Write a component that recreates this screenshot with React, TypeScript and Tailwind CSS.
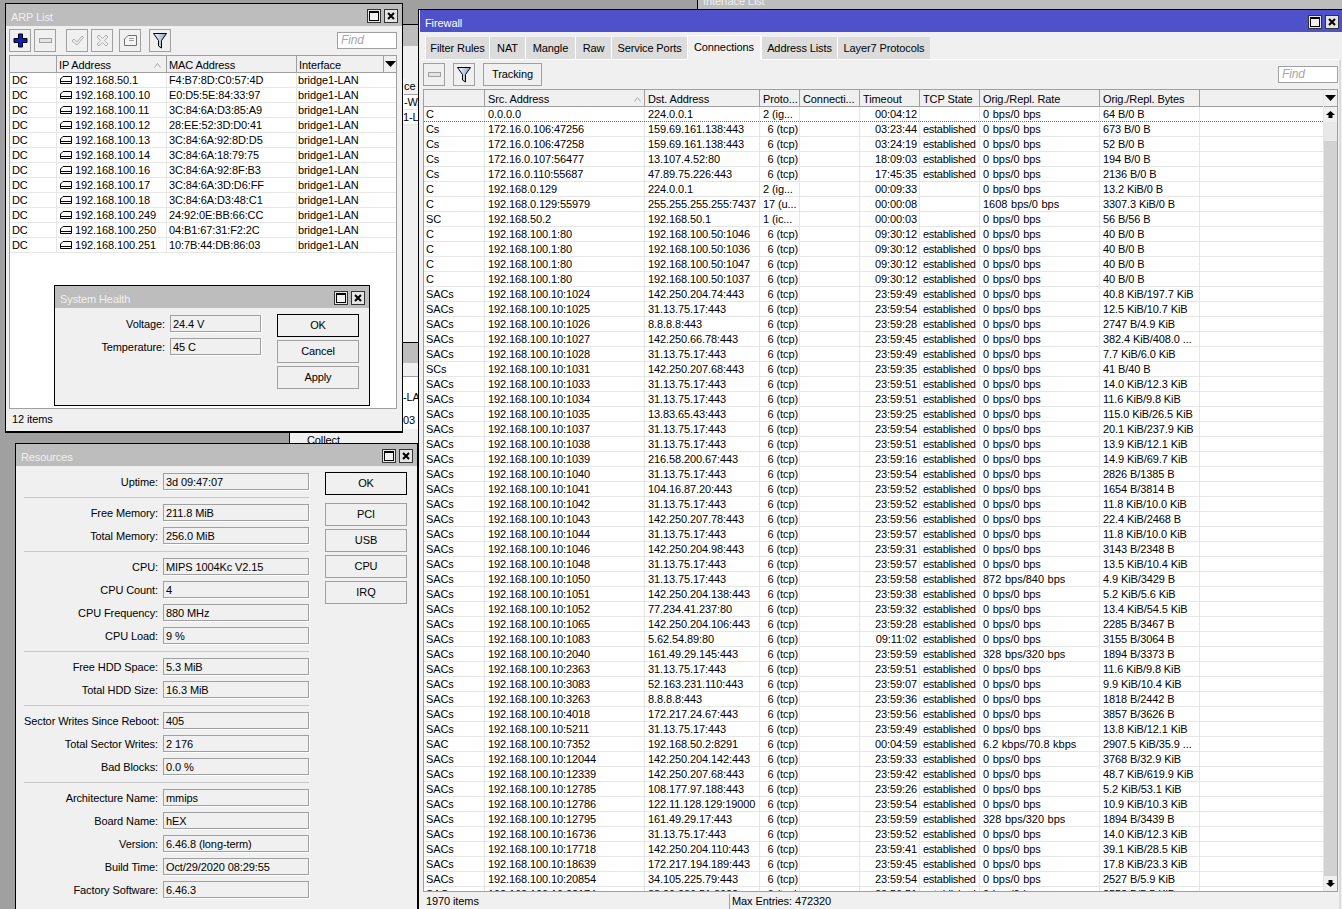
import type { ReactNode } from 'react'

const font = { fontFamily: '"Liberation Sans", Arial, sans-serif' }

const arpRows = [
  ['192.168.50.1', 'F4:B7:8D:C0:57:4D'],
  ['192.168.100.10', 'E0:D5:5E:84:33:97'],
  ['192.168.100.11', '3C:84:6A:D3:85:A9'],
  ['192.168.100.12', '28:EE:52:3D:D0:41'],
  ['192.168.100.13', '3C:84:6A:92:8D:D5'],
  ['192.168.100.14', '3C:84:6A:18:79:75'],
  ['192.168.100.16', '3C:84:6A:92:8F:B3'],
  ['192.168.100.17', '3C:84:6A:3D:D6:FF'],
  ['192.168.100.18', '3C:84:6A:D3:48:C1'],
  ['192.168.100.249', '24:92:0E:BB:66:CC'],
  ['192.168.100.250', '04:B1:67:31:F2:2C'],
  ['192.168.100.251', '10:7B:44:DB:86:03'],
]

// flags|src|dst|proto|timeout|state|rate|bytes
const connections = `C|0.0.0.0|224.0.0.1|2 (ig...|00:04:12||0 bps/0 bps|64 B/0 B
Cs|172.16.0.106:47256|159.69.161.138:443|6 (tcp)|03:23:44|established|0 bps/0 bps|673 B/0 B
Cs|172.16.0.106:47258|159.69.161.138:443|6 (tcp)|03:24:19|established|0 bps/0 bps|52 B/0 B
Cs|172.16.0.107:56477|13.107.4.52:80|6 (tcp)|18:09:03|established|0 bps/0 bps|194 B/0 B
Cs|172.16.0.110:55687|47.89.75.226:443|6 (tcp)|17:45:35|established|0 bps/0 bps|2136 B/0 B
C|192.168.0.129|224.0.0.1|2 (ig...|00:09:33||0 bps/0 bps|13.2 KiB/0 B
C|192.168.0.129:55979|255.255.255.255:7437|17 (u...|00:00:08||1608 bps/0 bps|3307.3 KiB/0 B
SC|192.168.50.2|192.168.50.1|1 (ic...|00:00:03||0 bps/0 bps|56 B/56 B
C|192.168.100.1:80|192.168.100.50:1046|6 (tcp)|09:30:12|established|0 bps/0 bps|40 B/0 B
C|192.168.100.1:80|192.168.100.50:1036|6 (tcp)|09:30:12|established|0 bps/0 bps|40 B/0 B
C|192.168.100.1:80|192.168.100.50:1047|6 (tcp)|09:30:12|established|0 bps/0 bps|40 B/0 B
C|192.168.100.1:80|192.168.100.50:1037|6 (tcp)|09:30:12|established|0 bps/0 bps|40 B/0 B
SACs|192.168.100.10:1024|142.250.204.74:443|6 (tcp)|23:59:49|established|0 bps/0 bps|40.8 KiB/197.7 KiB
SACs|192.168.100.10:1025|31.13.75.17:443|6 (tcp)|23:59:54|established|0 bps/0 bps|12.5 KiB/10.7 KiB
SACs|192.168.100.10:1026|8.8.8.8:443|6 (tcp)|23:59:28|established|0 bps/0 bps|2747 B/4.9 KiB
SACs|192.168.100.10:1027|142.250.66.78:443|6 (tcp)|23:59:45|established|0 bps/0 bps|382.4 KiB/408.0 ...
SACs|192.168.100.10:1028|31.13.75.17:443|6 (tcp)|23:59:49|established|0 bps/0 bps|7.7 KiB/6.0 KiB
SCs|192.168.100.10:1031|142.250.207.68:443|6 (tcp)|23:59:35|established|0 bps/0 bps|41 B/40 B
SACs|192.168.100.10:1033|31.13.75.17:443|6 (tcp)|23:59:51|established|0 bps/0 bps|14.0 KiB/12.3 KiB
SACs|192.168.100.10:1034|31.13.75.17:443|6 (tcp)|23:59:51|established|0 bps/0 bps|11.6 KiB/9.8 KiB
SACs|192.168.100.10:1035|13.83.65.43:443|6 (tcp)|23:59:25|established|0 bps/0 bps|115.0 KiB/26.5 KiB
SACs|192.168.100.10:1037|31.13.75.17:443|6 (tcp)|23:59:54|established|0 bps/0 bps|20.1 KiB/237.9 KiB
SACs|192.168.100.10:1038|31.13.75.17:443|6 (tcp)|23:59:51|established|0 bps/0 bps|13.9 KiB/12.1 KiB
SACs|192.168.100.10:1039|216.58.200.67:443|6 (tcp)|23:59:16|established|0 bps/0 bps|14.9 KiB/69.7 KiB
SACs|192.168.100.10:1040|31.13.75.17:443|6 (tcp)|23:59:54|established|0 bps/0 bps|2826 B/1385 B
SACs|192.168.100.10:1041|104.16.87.20:443|6 (tcp)|23:59:52|established|0 bps/0 bps|1654 B/3814 B
SACs|192.168.100.10:1042|31.13.75.17:443|6 (tcp)|23:59:52|established|0 bps/0 bps|11.8 KiB/10.0 KiB
SACs|192.168.100.10:1043|142.250.207.78:443|6 (tcp)|23:59:56|established|0 bps/0 bps|22.4 KiB/2468 B
SACs|192.168.100.10:1044|31.13.75.17:443|6 (tcp)|23:59:57|established|0 bps/0 bps|11.8 KiB/10.0 KiB
SACs|192.168.100.10:1046|142.250.204.98:443|6 (tcp)|23:59:31|established|0 bps/0 bps|3143 B/2348 B
SACs|192.168.100.10:1048|31.13.75.17:443|6 (tcp)|23:59:57|established|0 bps/0 bps|13.5 KiB/10.4 KiB
SACs|192.168.100.10:1050|31.13.75.17:443|6 (tcp)|23:59:58|established|872 bps/840 bps|4.9 KiB/3429 B
SACs|192.168.100.10:1051|142.250.204.138:443|6 (tcp)|23:59:38|established|0 bps/0 bps|5.2 KiB/5.6 KiB
SACs|192.168.100.10:1052|77.234.41.237:80|6 (tcp)|23:59:32|established|0 bps/0 bps|13.4 KiB/54.5 KiB
SACs|192.168.100.10:1065|142.250.204.106:443|6 (tcp)|23:59:28|established|0 bps/0 bps|2285 B/3467 B
SACs|192.168.100.10:1083|5.62.54.89:80|6 (tcp)|09:11:02|established|0 bps/0 bps|3155 B/3064 B
SACs|192.168.100.10:2040|161.49.29.145:443|6 (tcp)|23:59:59|established|328 bps/320 bps|1894 B/3373 B
SACs|192.168.100.10:2363|31.13.75.17:443|6 (tcp)|23:59:51|established|0 bps/0 bps|11.6 KiB/9.8 KiB
SACs|192.168.100.10:3083|52.163.231.110:443|6 (tcp)|23:59:07|established|0 bps/0 bps|9.9 KiB/10.4 KiB
SACs|192.168.100.10:3263|8.8.8.8:443|6 (tcp)|23:59:36|established|0 bps/0 bps|1818 B/2442 B
SACs|192.168.100.10:4018|172.217.24.67:443|6 (tcp)|23:59:56|established|0 bps/0 bps|3857 B/3626 B
SACs|192.168.100.10:5211|31.13.75.17:443|6 (tcp)|23:59:49|established|0 bps/0 bps|13.8 KiB/12.1 KiB
SAC|192.168.100.10:7352|192.168.50.2:8291|6 (tcp)|00:04:59|established|6.2 kbps/70.8 kbps|2907.5 KiB/35.9 ...
SACs|192.168.100.10:12044|142.250.204.142:443|6 (tcp)|23:59:33|established|0 bps/0 bps|3768 B/32.9 KiB
SACs|192.168.100.10:12339|142.250.207.68:443|6 (tcp)|23:59:42|established|0 bps/0 bps|48.7 KiB/619.9 KiB
SACs|192.168.100.10:12785|108.177.97.188:443|6 (tcp)|23:59:26|established|0 bps/0 bps|5.2 KiB/53.1 KiB
SACs|192.168.100.10:12786|122.11.128.129:19000|6 (tcp)|23:59:54|established|0 bps/0 bps|10.9 KiB/10.3 KiB
SACs|192.168.100.10:12795|161.49.29.17:443|6 (tcp)|23:59:59|established|328 bps/320 bps|1894 B/3439 B
SACs|192.168.100.10:16736|31.13.75.17:443|6 (tcp)|23:59:52|established|0 bps/0 bps|14.0 KiB/12.3 KiB
SACs|192.168.100.10:17718|142.250.204.110:443|6 (tcp)|23:59:41|established|0 bps/0 bps|39.1 KiB/28.5 KiB
SACs|192.168.100.10:18639|172.217.194.189:443|6 (tcp)|23:59:45|established|0 bps/0 bps|17.8 KiB/23.3 KiB
SACs|192.168.100.10:20854|34.105.225.79:443|6 (tcp)|23:59:54|established|0 bps/0 bps|2527 B/5.9 KiB
SAC|192.168.100.10:22174|38.99.236.51:8082|6 (tcp)|23:56:51|established|0 bps/0 bps|2558 B/5.5 KiB`
  .split('\n')
  .map((line) => line.split('|'))

const resourceGroups = [
  [['Uptime', '3d 09:47:07']],
  [
    ['Free Memory', '211.8 MiB'],
    ['Total Memory', '256.0 MiB'],
  ],
  [
    ['CPU', 'MIPS 1004Kc V2.15'],
    ['CPU Count', '4'],
    ['CPU Frequency', '880 MHz'],
    ['CPU Load', '9 %'],
  ],
  [
    ['Free HDD Space', '5.3 MiB'],
    ['Total HDD Size', '16.3 MiB'],
  ],
  [
    ['Sector Writes Since Reboot', '405'],
    ['Total Sector Writes', '2 176'],
    ['Bad Blocks', '0.0 %'],
  ],
  [
    ['Architecture Name', 'mmips'],
    ['Board Name', 'hEX'],
    ['Version', '6.46.8 (long-term)'],
    ['Build Time', 'Oct/29/2020 08:29:55'],
    ['Factory Software', '6.46.3'],
  ],
]

function TitleButtons() {
  return (
    <div className="flex gap-[3px]">
      <div className="w-[14px] h-[14px] border border-[#333] bg-[#e4e4e4] flex items-center justify-center">
        <div className="w-[10px] h-[10px] border border-black border-t-2 bg-[#f0f0f0]" />
      </div>
      <div className="w-[14px] h-[14px] border border-[#333] bg-[#e4e4e4] flex items-center justify-center">
        <svg width="8" height="8" viewBox="0 0 8 8">
          <path d="M1 1l6 6M7 1L1 7" stroke="#000" strokeWidth="2" />
        </svg>
      </div>
    </div>
  )
}

function TitleBar({ title, active }: { title: string; active?: boolean }) {
  return (
    <div
      className={`h-[22px] shrink-0 flex items-center justify-between pt-[2px] pl-[5px] pr-[4px] text-[11px] ${
        active ? 'bg-[#4f51cb] text-white' : 'bg-[#bdbdbd] text-[#f0f0f0]'
      }`}
    >
      <span className="pt-[2px]">{title}</span>
      <TitleButtons />
    </div>
  )
}

function ToolButton({ children, className = 'w-[22px]' }: { children: ReactNode; className?: string }) {
  return (
    <div className={`h-[23px] border border-[#a0a0a0] bg-[#f0f0f0] flex items-center justify-center ${className}`}>
      {children}
    </div>
  )
}

function PlusIcon() {
  return (
    <svg width="15" height="15" viewBox="0 0 15 15">
      <path d="M5.5 1h4v4.5H14v4H9.5V14h-4V9.5H1v-4h4.5z" fill="#0a1ec8" stroke="#000" />
    </svg>
  )
}

function MinusIcon() {
  return <div className="w-[13px] h-[5px] border border-[#a0a0a0] bg-[#e4e4e4]" />
}

function CheckIcon() {
  return (
    <svg width="15" height="15" viewBox="0 0 15 15">
      <path d="M2 8l2-2 3 3 5-6 1.500 1.500L7 12z" fill="#eee" stroke="#b0b0b0" />
    </svg>
  )
}

function CrossIcon() {
  return (
    <svg width="15" height="15" viewBox="0 0 15 15">
      <path d="M2 4l2-2 3.500 3.500L11 2l2 2-3.500 3.500L13 11l-2 2-3.500-3.500L4 13l-2-2 3.500-3.500z" fill="#eee" stroke="#b0b0b0" />
    </svg>
  )
}

function NoteIcon() {
  return (
    <svg width="15" height="13" viewBox="0 0 15 13">
      <path d="M1.500 11.500V5L5 1.500h8.500v10z" fill="#f4f4f4" stroke="#707070" />
      <path d="M6 4.500h5M6 6.500h5" stroke="#a0a0a0" />
    </svg>
  )
}

function FilterIcon() {
  return (
    <svg width="14" height="17" viewBox="0 0 14 17">
      <defs>
        <linearGradient id="funnel" x1="0" x2="1" y1="0" y2="0">
          <stop offset="0" stopColor="#f4f8fc" />
          <stop offset="1" stopColor="#8aa4c0" />
        </linearGradient>
      </defs>
      <path d="M.5 1.500h13L8.500 8.500v7.500l-3-2V8.500z" fill="url(#funnel)" stroke="#000" />
    </svg>
  )
}

function RowIcon() {
  return (
    <svg width="12" height="8" viewBox="0 0 12 8" className="shrink-0">
      <path d="M.5 7.500V3L3 .5h8.500v7z" fill="#fff" stroke="#000" />
      <path d="M1 5.500h10" stroke="#000" />
    </svg>
  )
}

function Arrow({ up }: { up?: boolean }) {
  return (
    <svg width="9" height="7" viewBox="0 0 9 7">
      <path d={up ? 'M4.500 0L9 4H6.500v3h-4V4H0z' : 'M2.500 0h4v3H9L4.500 7 0 3h2.500z'} fill="#000" />
    </svg>
  )
}

function DropTriangle() {
  return (
    <svg width="11" height="6" viewBox="0 0 11 6">
      <path d="M0 0h11L5.500 6z" fill="#000" />
    </svg>
  )
}

function SortMark() {
  return (
    <svg width="7" height="5" viewBox="0 0 7 5" className="shrink-0">
      <path d="M.5 4.500L3.500.5l3 4" fill="none" stroke="#a8a8a8" />
    </svg>
  )
}

function FindBox({ className }: { className: string }) {
  return (
    <div className={`h-[17px] border border-[#a0a0a0] bg-white text-[#a8a8a8] italic text-[12px] leading-[15px] pl-[3px] ${className}`}>
      Find
    </div>
  )
}

function HeaderCell({ children, className }: { children?: ReactNode; className: string }) {
  return (
    <div className={`h-full shrink-0 flex items-center pt-[2px] pr-[2px] border-r border-[#a0a0a0] whitespace-nowrap overflow-hidden ${className}`}>
      {children}
    </div>
  )
}

function Cell({ children, className }: { children?: ReactNode; className: string }) {
  return (
    <div className={`h-full shrink-0 flex items-center border-r border-[#e6e6e6] whitespace-nowrap overflow-hidden ${className}`}>
      {children}
    </div>
  )
}

function Field({ label, value, labelWidth }: { label: string; value: string; labelWidth: string }) {
  return (
    <div className="flex items-center h-[17px]">
      <div className={`text-right pr-[5px] mt-[2px] shrink-0 whitespace-nowrap ${labelWidth}`}>{label}:</div>
      <div className="flex-1 h-[17px] border border-[#a0a0a0] bg-[#f0f0f0] leading-[14px] pt-[1px] pl-[2px] shadow-[1px_1px_0_#fff]">{value}</div>
    </div>
  )
}

function DialogButton({ label, primary, className = '' }: { label: string; primary?: boolean; className?: string }) {
  return (
    <div
      className={`w-[82px] h-[23px] flex items-center justify-center border bg-[#f0f0f0] ${
        primary ? 'border-black' : 'border-[#a0a0a0]'
      } ${className}`}
    >
      {label}
    </div>
  )
}

function ArpList() {
  return (
    <div className="absolute left-[5px] top-[3px] w-[398px] h-[430px] border border-black border-b-2 bg-[#f0f0f0] flex flex-col">
      <TitleBar title="ARP List" />
      <div className="flex items-center gap-[3px] pl-[3px] pr-[5px] pt-[3px] h-[26px]">
        <ToolButton><PlusIcon /></ToolButton>
        <ToolButton><MinusIcon /></ToolButton>
        <ToolButton className="w-[22px] ml-[7px]"><CheckIcon /></ToolButton>
        <ToolButton><CrossIcon /></ToolButton>
        <ToolButton className="w-[22px] ml-[3px]"><NoteIcon /></ToolButton>
        <ToolButton className="w-[22px] ml-[5px]"><FilterIcon /></ToolButton>
        <FindBox className="w-[60px] ml-auto" />
      </div>
      <div className="mx-[3px] mr-[5px] mt-[3px] h-[354px] border border-[#a0a0a0] bg-white overflow-hidden">
        <div className="h-[17px] flex bg-[#f0f0f0] border-b border-[#a0a0a0]">
          <HeaderCell className="w-[47px] pl-[2px]" />
          <HeaderCell className="w-[110px] pl-[2px] justify-between">
            <span>IP Address</span>
            <span className="pr-[3px]"><SortMark /></span>
          </HeaderCell>
          <HeaderCell className="w-[130px] pl-[2px]">MAC Address</HeaderCell>
          <HeaderCell className="w-[87px] pl-[2px]">Interface</HeaderCell>
          <div className="flex-1 flex items-center justify-center"><DropTriangle /></div>
        </div>
        {arpRows.map(([ip, mac]) => (
          <div key={ip} className="h-[15px] flex border-b border-[#e6e6e6]">
            <Cell className="w-[47px] pl-[2px]">DC</Cell>
            <Cell className="w-[110px] pl-[3px] gap-[3px]"><RowIcon />{ip}</Cell>
            <Cell className="w-[130px] pl-[2px]">{mac}</Cell>
            <div className="flex-1 pl-[1px] flex items-center whitespace-nowrap">bridge1-LAN</div>
          </div>
        ))}
      </div>
      <div className="flex-1 flex items-center pl-[6px] pb-[2px]">12 items</div>
    </div>
  )
}

function SystemHealth() {
  return (
    <div className="absolute left-[54px] top-[285px] w-[316px] h-[121px] border border-black bg-[#f0f0f0] flex flex-col">
      <TitleBar title="System Health" />
      <div className="flex pl-[5px] pr-[9px] pt-[6px] gap-[16px]">
        <div className="w-[201px] pt-[1px] flex flex-col gap-[6px]">
          <Field label="Voltage" value="24.4 V" labelWidth="w-[110px]" />
          <Field label="Temperature" value="45 C" labelWidth="w-[110px]" />
        </div>
        <div className="flex flex-col gap-[3px]">
          <DialogButton label="OK" primary />
          <DialogButton label="Cancel" />
          <DialogButton label="Apply" />
        </div>
      </div>
    </div>
  )
}

function Resources() {
  return (
    <div className="absolute left-[15px] top-[443px] w-[403px] h-[480px] border border-black bg-[#f0f0f0] flex flex-col">
      <TitleBar title="Resources" />
      <div className="flex pl-[8px] pt-[7px]">
        <div className="w-[285px] flex flex-col">
          {resourceGroups.map((group, i) => (
            <div key={i} className={i > 0 ? 'mt-[7px] pt-[6px] border-t border-[#c8c8c8]' : ''}>
              <div className="flex flex-col gap-[6px]">
                {group.map(([label, value]) => (
                  <Field key={label} label={label} value={value} labelWidth="w-[139px]" />
                ))}
              </div>
            </div>
          ))}
        </div>
        <div className="ml-[16px] -mt-[1px] flex flex-col gap-[3px]">
          <DialogButton label="OK" primary className="mb-[5px]" />
          <DialogButton label="PCI" />
          <DialogButton label="USB" />
          <DialogButton label="CPU" />
          <DialogButton label="IRQ" />
        </div>
      </div>
    </div>
  )
}

const tabs = [
  ['Filter Rules', 'w-[64px]'],
  ['NAT', 'w-[36px]'],
  ['Mangle', 'w-[50px]'],
  ['Raw', 'w-[36px]'],
  ['Service Ports', 'w-[76px]'],
  ['Connections', 'w-[74px]'],
  ['Address Lists', 'w-[76px]'],
  ['Layer7 Protocols', 'w-[93px]'],
]

function Firewall() {
  return (
    <div className="absolute left-[418px] top-[9px] w-[930px] h-[905px] border border-black bg-[#f0f0f0] flex flex-col">
      <div className="ml-[1px] pr-[4px]">
        <TitleBar title="Firewall" active />
      </div>
      <div className="h-[27px] pl-[6px] flex items-end">
        {tabs.map(([name, width]) =>
          name === 'Connections' ? (
            <div key={name} className={`${width} h-[25px] -mb-[1px] relative bg-[#f0f0f0] border border-b-0 border-white flex items-center justify-center pb-[2px] whitespace-nowrap`}>
              {name}
            </div>
          ) : (
            <div key={name} className={`${width} h-[22px] bg-[#dcdcdc] border-l border-white flex items-center justify-center whitespace-nowrap`}>
              {name}
            </div>
          ),
        )}
      </div>
      <div className="ml-[2px] w-[920px] flex-1 border-t border-white border-r-2 border-r-[#dcdcdc] pl-[2px] pr-[1px] flex flex-col">
        <div className="h-[29px] pt-[3px] flex items-start">
          <ToolButton><MinusIcon /></ToolButton>
          <ToolButton className="w-[22px] ml-[8px]"><FilterIcon /></ToolButton>
          <ToolButton className="w-[59px] ml-[8px]">Tracking</ToolButton>
          <FindBox className="w-[60px] ml-auto mt-[3px]" />
        </div>
        <div className="h-[803px] flex border border-[#a0a0a0] bg-white overflow-hidden">
          <div className="w-[899px] overflow-hidden">
            <div className="h-[17px] flex bg-[#f0f0f0] border-b border-[#a0a0a0]">
              <HeaderCell className="w-[61px] pl-[3px]" />
              <HeaderCell className="w-[160px] pl-[3px] justify-between">
                <span>Src. Address</span>
                <span className="pr-[1px]"><SortMark /></span>
              </HeaderCell>
              <HeaderCell className="w-[115px] pl-[3px]">Dst. Address</HeaderCell>
              <HeaderCell className="w-[40px] pl-[3px]">Proto...</HeaderCell>
              <HeaderCell className="w-[60px] pl-[3px]">Connecti...</HeaderCell>
              <HeaderCell className="w-[60px] pl-[3px]">Timeout</HeaderCell>
              <HeaderCell className="w-[60px] pl-[3px]">TCP State</HeaderCell>
              <HeaderCell className="w-[120px] pl-[3px]">Orig./Repl. Rate</HeaderCell>
              <HeaderCell className="w-[100px] pl-[3px]">Orig./Repl. Bytes</HeaderCell>
              <div className="flex-1" />
            </div>
            {connections.map(([flags, src, dst, proto, timeout, state, rate, bytes], i) => (
              <div
                key={i}
                className={`h-[15px] flex border-b ${i === 0 ? 'border-dotted border-[#707070]' : 'border-[#e6e6e6]'}`}
              >
                <Cell className="w-[61px] pl-[2px]">{flags}</Cell>
                <Cell className="w-[160px] pl-[3px]">{src}</Cell>
                <Cell className="w-[115px] pl-[3px]">{dst}</Cell>
                <Cell className={`w-[40px] ${proto === '6 (tcp)' ? 'justify-end pr-[1px]' : 'pl-[3px]'}`}>{proto}</Cell>
                <Cell className="w-[60px]" />
                <Cell className="w-[60px] justify-end pr-[2px]">{timeout}</Cell>
                <Cell className="w-[60px] pl-[3px] tracking-[-0.28px]">{state}</Cell>
                <Cell className="w-[120px] pl-[3px] tracking-normal [word-spacing:0.5px]">{rate}</Cell>
                <Cell className="w-[100px] pl-[3px]">{bytes}</Cell>
                <div className="flex-1" />
              </div>
            ))}
          </div>
          <div className="flex-1 flex flex-col border-l border-[#e6e6e6] bg-[#d2d2d2]">
            <div className="h-[17px] bg-[#f0f0f0] border-b border-[#a0a0a0] flex items-center justify-center"><DropTriangle /></div>
            <div className="h-[15px] bg-[#f0f0f0] flex items-center justify-center"><Arrow up /></div>
            <div className="h-[19px] bg-[#e8e8e8]" />
            <div className="flex-1" />
            <div className="h-[15px] bg-[#f0f0f0] flex items-center justify-center"><Arrow /></div>
          </div>
        </div>
        <div className="flex h-[17px] items-center pt-[2px]">
          <div className="w-[307px] pl-[3px] border-r border-[#a0a0a0] h-full flex items-center">1970 items</div>
          <div className="pl-[2px]">Max Entries: 472320</div>
        </div>
      </div>
    </div>
  )
}

function BackWindows() {
  return (
    <>
      <div className="absolute left-[697px] -top-[8px] w-[660px] h-[40px] border border-black bg-[#bdbdbd] text-[#f0f0f0] pl-[5px] pt-[2px]">
        Interface List
      </div>
      <div className="absolute left-[330px] top-[24px] w-[89px] h-[320px] border border-black bg-[#f0f0f0] flex flex-col overflow-hidden">
        <div className="h-[21px] bg-[#bdbdbd]" />
        <div className="mt-[33px] h-[46px] bg-white pl-[73px] flex flex-col whitespace-nowrap">
          <div className="h-[16px] bg-[#f0f0f0] border-b border-[#a0a0a0] leading-[14px]">ce</div>
          <div className="h-[15px] border-b border-[#e6e6e6] leading-[14px]">-WAN</div>
          <div className="h-[15px] border-b border-[#e6e6e6] leading-[14px] -ml-[1px]">1-LAN</div>
        </div>
      </div>
      <div className="absolute left-[289px] top-[342px] w-[130px] h-[120px] border border-black bg-[#f0f0f0] flex flex-col overflow-hidden">
        <div className="h-[20px] bg-[#bdbdbd] shrink-0" />
        <div className="mt-[13px] h-[53px] shrink-0 pl-[113px] bg-white border-t border-[#a0a0a0] flex flex-col whitespace-nowrap">
          <div className="mt-[14px] leading-[13px]">-LAN</div>
          <div className="mt-[10px] leading-[13px]">03</div>
        </div>
        <div className="mt-[11px] ml-[8px] relative">
          <div className="border-t border-[#a0a0a0] w-[100px] mt-[6px]" />
          <span className="absolute left-[6px] -top-[6px] px-[3px] bg-[#f0f0f0]">Collect</span>
        </div>
      </div>
    </>
  )
}

export default function App() {
  return (
    <div
      className="relative w-[1342px] h-[909px] overflow-hidden bg-[#a0a0a0] text-[11px] leading-[13px] tracking-[-0.1px] text-black"
      style={font}
    >
      <BackWindows />
      <Firewall />
      <ArpList />
      <SystemHealth />
      <Resources />
    </div>
  )
}
